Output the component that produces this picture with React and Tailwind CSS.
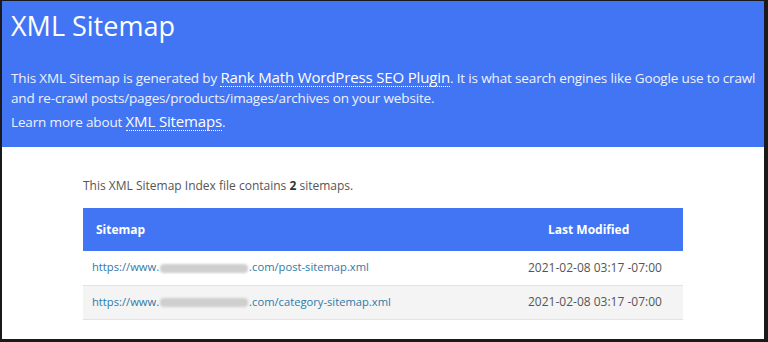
const ROWS = [
  { path: '.com/post-sitemap.xml', date: '2021-02-08 03:17 -07:00' },
  { path: '.com/category-sitemap.xml', date: '2021-02-08 03:17 -07:00' },
];

function Blurred() {
  return <span className="inline-block w-[88px] h-[9px] align-middle rounded-sm bg-[#cfcfcf] blur-[1px] mx-[1px]" />;
}

export default function App() {
  return (
    <div
      className="w-[768px] h-[342px] overflow-hidden bg-white border-l-2 border-t border-r-[4px] border-b-[3px] border-[#1a1a1a]"
      style={{ fontFamily: '"Open Sans", "Noto Sans", sans-serif' }}
    >
      <header className="bg-[#4275f4] text-white pl-[9px] pt-[8px] h-[146px]">
        <h1 className="text-[27px] leading-[34px] font-normal">XML Sitemap</h1>
        <p className="mt-[25px] text-[13.5px] leading-[20px] tracking-[-0.15px] text-[#eef2fe]">
          This XML Sitemap is generated by{' '}
          <a className="inline-block leading-[18px] text-[15px] text-white border-b border-dotted border-white">Rank Math WordPress SEO Plugin</a>
          . It is what search engines like Google use to crawl and re-crawl posts/pages/products/images/archives on your website.
        </p>
        <p className="mt-[4px] text-[13.5px] leading-[20px] tracking-[-0.15px] text-[#eef2fe]">
          Learn more about{' '}
          <a className="inline-block leading-[18px] text-[15px] text-white border-b border-dotted border-white">XML Sitemaps</a>.
        </p>
      </header>

      <main className="pl-[81px] pt-[30px]">
        <p className="text-[12px] text-[#555]">
          This XML Sitemap Index file contains <b className="text-[#333]">2</b> sitemaps.
        </p>
        <table className="mt-[13px] w-[600px] text-[12px] border-collapse">
          <thead>
            <tr className="bg-[#4275f4] text-white h-[43px]">
              <th className="text-left font-bold pl-[13px]">Sitemap</th>
              <th className="text-left font-bold pl-[20px] w-[155px]">Last Modified</th>
            </tr>
          </thead>
          <tbody>
            {ROWS.map((r, i) => (
              <tr key={r.path} className={`h-[34px] border-b border-[#e3e3e3] ${i % 2 ? 'bg-[#f4f4f4]' : 'bg-white'}`}>
                <td className="pl-[9px] text-[11.2px] text-[#2f79a8]">
                  https://www.<Blurred />{r.path}
                </td>
                <td className="text-[#555]">{r.date}</td>
              </tr>
            ))}
          </tbody>
        </table>
      </main>
    </div>
  );
}
